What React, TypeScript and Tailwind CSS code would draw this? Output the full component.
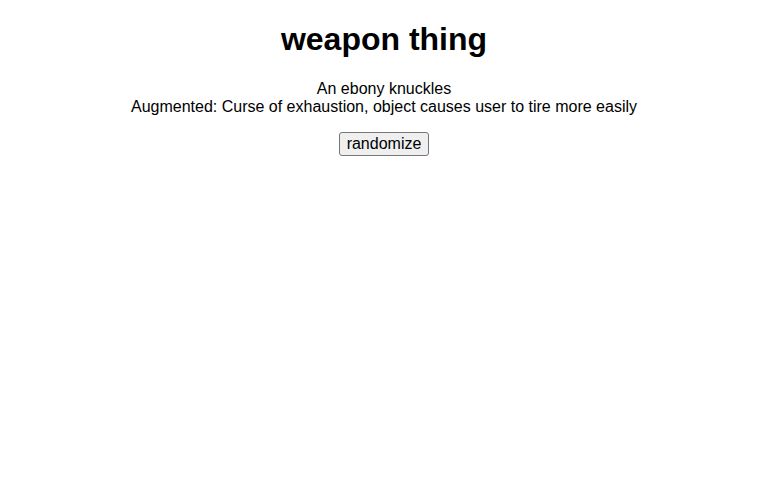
import { useState } from "react";

const weapons = ["knuckles"];

export default function App() {
  const [item] = useState({
    material: "ebony",
    weapon: weapons[0],
    augment: "Curse of exhaustion, object causes user to tire more easily",
  });

  return (
    <div className="min-h-screen bg-white text-center text-black font-['Liberation_Sans',Arial,sans-serif]">
      <h1 className="text-[32px] leading-[1.15] font-bold pt-[21px] mb-[22px]">weapon thing</h1>

      <div className="text-base leading-[1.15]">
        <div>An {item.material} {item.weapon}</div>
        <div>Augmented: {item.augment}</div>
      </div>

      <div className="mt-[15px]">
        <button
          type="button"
          className="px-[7px] py-[2px] text-base leading-[1.15] bg-[#efefef] border border-[#767676] rounded-[3px] hover:bg-[#e5e5e5]"
        >
          randomize
        </button>
      </div>
    </div>
  );
}
